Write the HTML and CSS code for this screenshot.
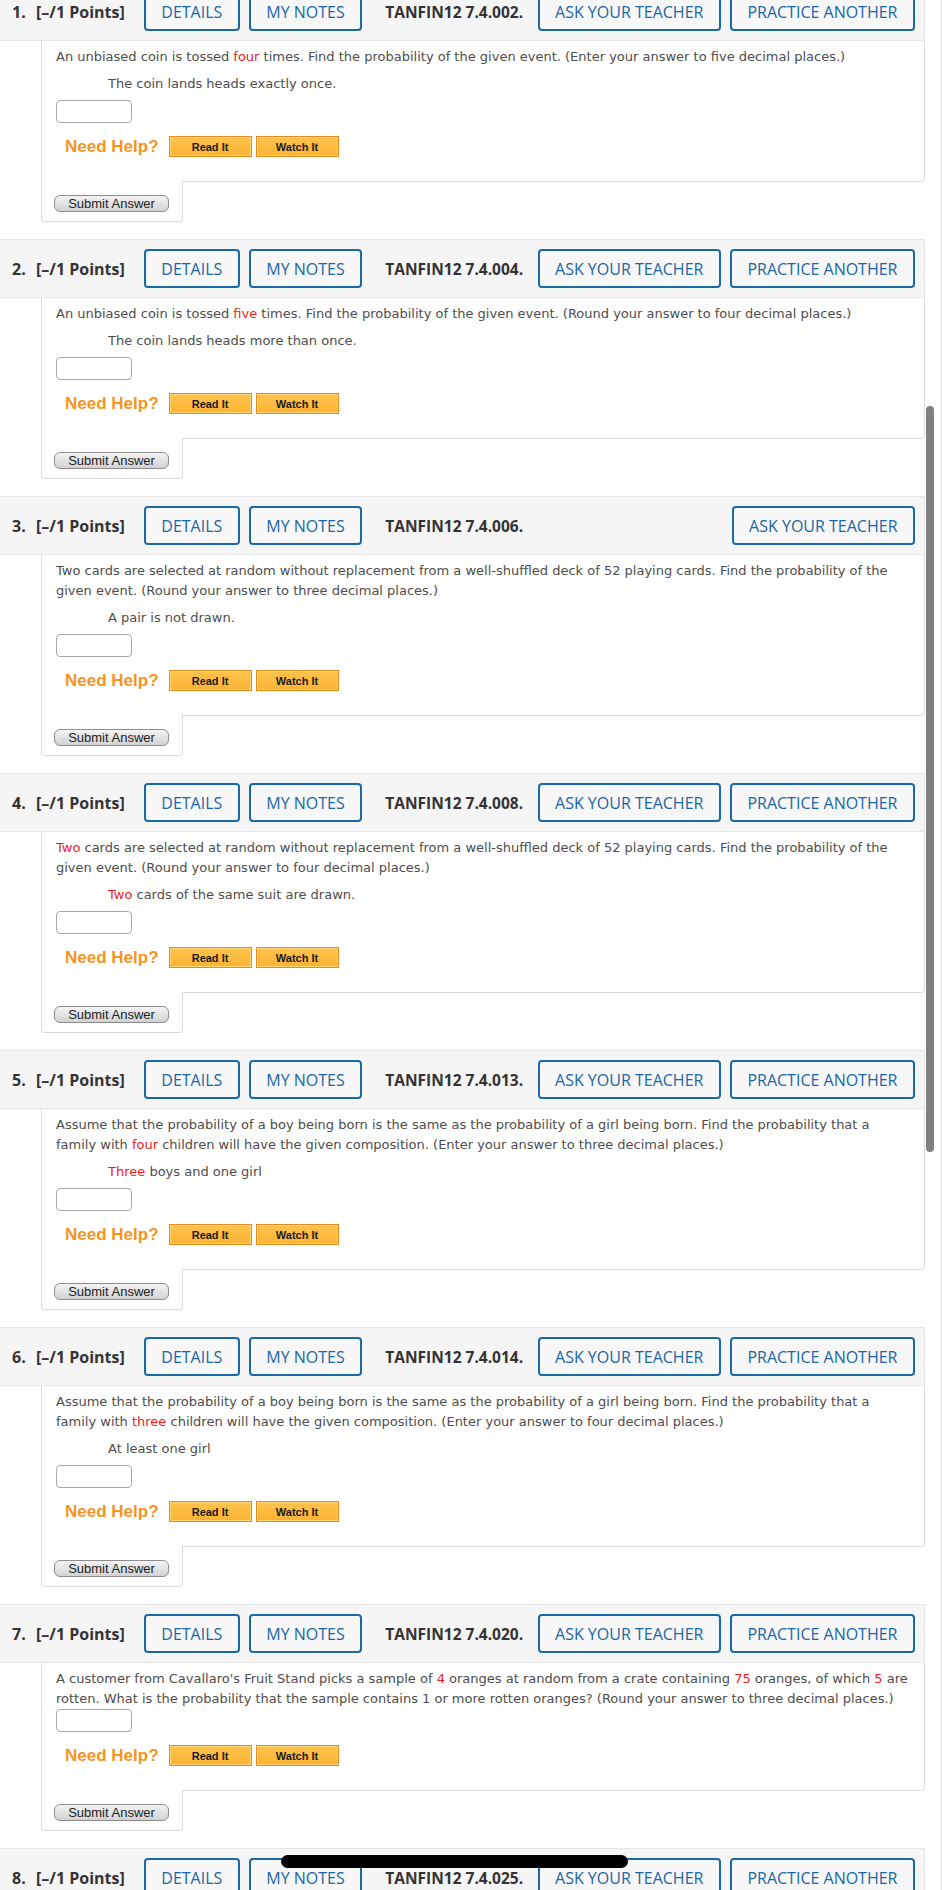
FILE: index.html
```html
<!DOCTYPE html>
<html lang="en">
<head>
<meta charset="utf-8">
<title>Assignment</title>
<link rel="stylesheet" href="styles.css">
</head>
<body>
<div class="screen">
  <div class="main">
    <div class="list">

      <section class="q">
        <div class="q-head">
          <span class="q-num">1.</span><span class="q-pts">[–/1 Points]</span>
          <a class="btn">DETAILS</a><a class="btn">MY NOTES</a>
          <span class="q-code">TANFIN12 7.4.002.</span>
          <div class="q-right"><a class="btn">ASK YOUR TEACHER</a><a class="btn">PRACTICE ANOTHER</a></div>
        </div>
        <div class="q-main">
          <p class="q-text">An unbiased coin is tossed <span class="red">four</span> times. Find the probability of the given event. (Enter your answer to five decimal places.)</p>
          <p class="q-sub">The coin lands heads exactly once.</p>
          <div class="answer"></div>
          <div class="help"><span class="need">Need Help?</span><span class="hbtn">Read It</span><span class="hbtn">Watch It</span></div>
        </div>
        <div class="q-submit"><span class="submit">Submit Answer</span></div>
      </section>

      <section class="q">
        <div class="q-head">
          <span class="q-num">2.</span><span class="q-pts">[–/1 Points]</span>
          <a class="btn">DETAILS</a><a class="btn">MY NOTES</a>
          <span class="q-code">TANFIN12 7.4.004.</span>
          <div class="q-right"><a class="btn">ASK YOUR TEACHER</a><a class="btn">PRACTICE ANOTHER</a></div>
        </div>
        <div class="q-main">
          <p class="q-text">An unbiased coin is tossed <span class="red">five</span> times. Find the probability of the given event. (Round your answer to four decimal places.)</p>
          <p class="q-sub">The coin lands heads more than once.</p>
          <div class="answer"></div>
          <div class="help"><span class="need">Need Help?</span><span class="hbtn">Read It</span><span class="hbtn">Watch It</span></div>
        </div>
        <div class="q-submit"><span class="submit">Submit Answer</span></div>
      </section>

      <section class="q">
        <div class="q-head">
          <span class="q-num">3.</span><span class="q-pts">[–/1 Points]</span>
          <a class="btn">DETAILS</a><a class="btn">MY NOTES</a>
          <span class="q-code">TANFIN12 7.4.006.</span>
          <div class="q-right"><a class="btn">ASK YOUR TEACHER</a></div>
        </div>
        <div class="q-main">
          <p class="q-text">Two cards are selected at random without replacement from a well-shuffled deck of 52 playing cards. Find the probability of the given event. (Round your answer to three decimal places.)</p>
          <p class="q-sub">A pair is not drawn.</p>
          <div class="answer"></div>
          <div class="help"><span class="need">Need Help?</span><span class="hbtn">Read It</span><span class="hbtn">Watch It</span></div>
        </div>
        <div class="q-submit"><span class="submit">Submit Answer</span></div>
      </section>

      <section class="q">
        <div class="q-head">
          <span class="q-num">4.</span><span class="q-pts">[–/1 Points]</span>
          <a class="btn">DETAILS</a><a class="btn">MY NOTES</a>
          <span class="q-code">TANFIN12 7.4.008.</span>
          <div class="q-right"><a class="btn">ASK YOUR TEACHER</a><a class="btn">PRACTICE ANOTHER</a></div>
        </div>
        <div class="q-main">
          <p class="q-text"><span class="red">Two</span> cards are selected at random without replacement from a well-shuffled deck of 52 playing cards. Find the probability of the given event. (Round your answer to four decimal places.)</p>
          <p class="q-sub"><span class="red">Two</span> cards of the same suit are drawn.</p>
          <div class="answer"></div>
          <div class="help"><span class="need">Need Help?</span><span class="hbtn">Read It</span><span class="hbtn">Watch It</span></div>
        </div>
        <div class="q-submit"><span class="submit">Submit Answer</span></div>
      </section>

      <section class="q">
        <div class="q-head">
          <span class="q-num">5.</span><span class="q-pts">[–/1 Points]</span>
          <a class="btn">DETAILS</a><a class="btn">MY NOTES</a>
          <span class="q-code">TANFIN12 7.4.013.</span>
          <div class="q-right"><a class="btn">ASK YOUR TEACHER</a><a class="btn">PRACTICE ANOTHER</a></div>
        </div>
        <div class="q-main">
          <p class="q-text">Assume that the probability of a boy being born is the same as the probability of a girl being born. Find the probability that a family with <span class="red">four</span> children will have the given composition. (Enter your answer to three decimal places.)</p>
          <p class="q-sub"><span class="red">Three</span> boys and one girl</p>
          <div class="answer"></div>
          <div class="help"><span class="need">Need Help?</span><span class="hbtn">Read It</span><span class="hbtn">Watch It</span></div>
        </div>
        <div class="q-submit"><span class="submit">Submit Answer</span></div>
      </section>

      <section class="q">
        <div class="q-head">
          <span class="q-num">6.</span><span class="q-pts">[–/1 Points]</span>
          <a class="btn">DETAILS</a><a class="btn">MY NOTES</a>
          <span class="q-code">TANFIN12 7.4.014.</span>
          <div class="q-right"><a class="btn">ASK YOUR TEACHER</a><a class="btn">PRACTICE ANOTHER</a></div>
        </div>
        <div class="q-main">
          <p class="q-text">Assume that the probability of a boy being born is the same as the probability of a girl being born. Find the probability that a family with <span class="red">three</span> children will have the given composition. (Enter your answer to four decimal places.)</p>
          <p class="q-sub">At least one girl</p>
          <div class="answer"></div>
          <div class="help"><span class="need">Need Help?</span><span class="hbtn">Read It</span><span class="hbtn">Watch It</span></div>
        </div>
        <div class="q-submit"><span class="submit">Submit Answer</span></div>
      </section>

      <section class="q">
        <div class="q-head">
          <span class="q-num">7.</span><span class="q-pts">[–/1 Points]</span>
          <a class="btn">DETAILS</a><a class="btn">MY NOTES</a>
          <span class="q-code">TANFIN12 7.4.020.</span>
          <div class="q-right"><a class="btn">ASK YOUR TEACHER</a><a class="btn">PRACTICE ANOTHER</a></div>
        </div>
        <div class="q-main">
          <p class="q-text">A customer from Cavallaro's Fruit Stand picks a sample of <span class="red">4</span> oranges at random from a crate containing <span class="red">75</span> oranges, of which <span class="red">5</span> are rotten. What is the probability that the sample contains 1 or more rotten oranges? (Round your answer to three decimal places.)</p>
          <div class="answer"></div>
          <div class="help"><span class="need">Need Help?</span><span class="hbtn">Read It</span><span class="hbtn">Watch It</span></div>
        </div>
        <div class="q-submit"><span class="submit">Submit Answer</span></div>
      </section>

      <section class="q">
        <div class="q-head">
          <span class="q-num">8.</span><span class="q-pts">[–/1 Points]</span>
          <a class="btn">DETAILS</a><a class="btn">MY NOTES</a>
          <span class="q-code">TANFIN12 7.4.025.</span>
          <div class="q-right"><a class="btn">ASK YOUR TEACHER</a><a class="btn">PRACTICE ANOTHER</a></div>
        </div>
      </section>

    </div>
    <div class="home-bar"></div>
  </div>
  <div class="gutter"><div class="thumb"></div></div>
</div>
</body>
</html>
```

FILE: styles.css
```css
html, body {
  margin: 0;
  padding: 0;
  background: #ffffff;
}
body {
  height: 1890px;
  overflow: hidden;
}
.screen {
  display: flex;
  width: 942px;
  height: 1890px;
  overflow: hidden;
}
.main {
  position: relative;
  width: 925px;
  flex: none;
}
.list {
  margin-top: -18px;
}
.gutter {
  position: relative;
  flex: 1;
  border-right: 1px solid #e2e2e2;
}
.thumb {
  position: absolute;
  left: 1px;
  top: 406px;
  width: 8px;
  height: 746px;
  border-radius: 4px;
  background: #808080;
}
.home-bar {
  position: absolute;
  left: 281px;
  top: 1855px;
  width: 347px;
  height: 13px;
  border-radius: 7px;
  background: #000;
}

.q {
  margin-bottom: 17px;
}
.q-head {
  box-sizing: border-box;
  height: 59px;
  display: flex;
  align-items: center;
  padding: 0 9px 0 12px;
  background: #f5f5f5;
  border: 1px solid #e6e6e6;
  border-left: none;
  font-family: "Open Sans", "DejaVu Sans", sans-serif;
  color: #333;
}
.q-num {
  font-weight: 700;
  font-size: 16px;
  width: 24px;
}
.q-pts {
  font-weight: 700;
  font-size: 16px;
  margin-right: 19px;
}
.q-code {
  font-weight: 700;
  font-size: 15.5px;
  margin-left: 14px;
}
.q-right {
  margin-left: auto;
  display: flex;
  gap: 9px;
}
.btn {
  box-sizing: border-box;
  height: 39px;
  display: inline-flex;
  align-items: center;
  padding: 0 15.5px;
  margin-right: 9px;
  border: 2px solid #1a69a7;
  border-radius: 4px;
  background: #f7f7f7;
  color: #1a66a6;
  font-size: 16px;
  font-weight: 500;
  white-space: nowrap;
}
.q-right .btn {
  margin-right: 0;
}

.q-main {
  margin-left: 41px;
  padding: 6px 13px 24px 14px;
  border: 1px solid #dcdcdc;
  border-top: none;
  border-radius: 0 0 4px 0;
  font-family: "DejaVu Sans", Verdana, sans-serif;
  font-size: 13px;
  line-height: 20px;
  color: #4d4d4d;
}
.q-text {
  margin: 0;
}
.q-sub {
  margin: 7px 0 0 52px;
}
.red {
  color: #ee1c1c;
}
.answer {
  box-sizing: border-box;
  width: 76px;
  height: 23px;
  border: 1px solid #a9a9a9;
  border-radius: 4px;
  background: #fff;
}
.q-sub + .answer {
  margin-top: 6px;
}
.help {
  display: flex;
  align-items: center;
  margin-top: 13px;
  padding-left: 9px;
  height: 21px;
}
.need {
  font-family: "Liberation Sans", Arial, sans-serif;
  font-weight: 700;
  font-size: 17px;
  color: #f7941e;
  margin-right: 10px;
}
.hbtn {
  box-sizing: border-box;
  width: 83px;
  height: 21px;
  margin-right: 4px;
  display: inline-flex;
  align-items: center;
  justify-content: center;
  border: 1px solid #ea8a1c;
  box-shadow: inset 0 0 0 1px #fdd472;
  background: linear-gradient(#fec44e, #fbb232);
  font-family: "Liberation Sans", Arial, sans-serif;
  font-weight: 700;
  font-size: 11px;
  color: #1a1a1a;
}

.q-submit {
  position: relative;
  box-sizing: border-box;
  width: 142px;
  margin: -1px 0 0 41px;
  padding: 14px 0 9px 12px;
  background: #fff;
  border: 1px solid #dcdcdc;
  border-top: none;
  border-radius: 0 0 4px 4px;
}
.submit {
  box-sizing: border-box;
  display: flex;
  align-items: center;
  justify-content: center;
  width: 115px;
  height: 17px;
  border: 1px solid #8c8c8c;
  border-radius: 6px;
  background: linear-gradient(#f4f4f4, #d2d2d2);
  font-family: "Liberation Sans", Arial, sans-serif;
  font-size: 13px;
  color: #222;
}
```
